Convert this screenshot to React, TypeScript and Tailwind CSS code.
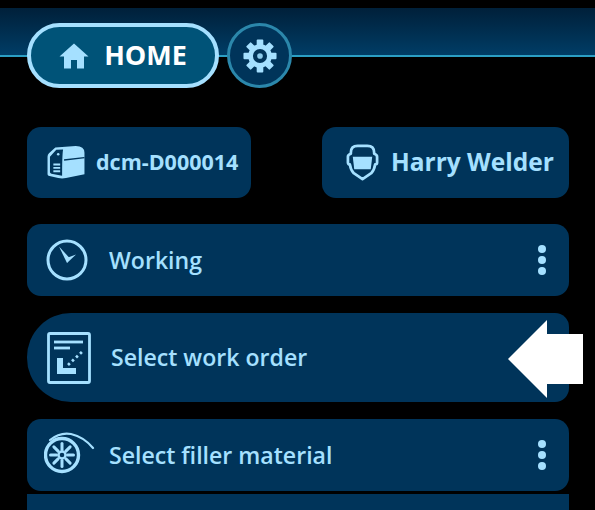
import type { ReactNode } from 'react';

const FONT = "font-['Open_Sans',sans-serif]";

const HomeIcon = () => (
  <svg viewBox="0 0 30 26" className="w-[30px] h-[26px]">
    <path
      fill="#a5e0ff"
      d="M15 0.500 L29.500 13.500 H25 V25.500 H18 V17 H12 V25.500 H5 V13.500 H0.500 Z"
    />
  </svg>
);

const GearIcon = () => (
  <svg viewBox="0 0 36 36" className="w-[34px] h-[34px]">
    <g fill="#a5e0ff">
      {[0, 45, 90, 135, 180, 225, 270, 315].map((a) => (
        <rect key={a} x="14.5" y="0.500" width="7" height="9" rx="1" transform={`rotate(${a} 18 18)`} />
      ))}
    </g>
    <circle cx="18" cy="18" r="12.500" fill="#a5e0ff" />
    <circle cx="18" cy="18" r="7.500" fill="#00345a" />
    <circle cx="18" cy="18" r="3" fill="#8ccbec" />
  </svg>
);

const MachineIcon = () => (
  <svg viewBox="0 0 40 36" className="w-[40px] h-[35px]">
    <path
      d="M9 2.500 L30 1 Q39 1 39 8 V30 L20 34 Q16 35 12 34 L3 32 Q1 31.500 1 30 V12 Q1 10 2.500 8.500 Z"
      fill="#a5e0ff"
    />
    <path d="M3.500 12 L10 5 L17 4.500 Q16 10 16 31.500 L5 29.500 Q3.500 29 3.500 28 Z" fill="#00345a" />
    <circle cx="12" cy="9.500" r="1.300" fill="#a5e0ff" />
    <path d="M7 20 H14 M7 23.500 H14 M7 27 H14" stroke="#a5e0ff" strokeWidth="2" />
    <path d="M18 15.500 L39 13" stroke="#00345a" strokeWidth="1.500" />
  </svg>
);

const HelmetIcon = () => (
  <svg viewBox="0 0 36 38" className="w-[35px] h-[37px]">
    <path
      d="M6 9 Q6 2 13 2 H23 Q30 2 30 9 V10 Q33 11 33 13 V19 Q33 21 31 21 Q30 27 27 30 L18 36 L9 30 Q6 27 5 21 Q3 21 3 19 V13 Q3 11 6 10 Z"
      fill="none"
      stroke="#a5e0ff"
      strokeWidth="2.800"
      strokeLinejoin="round"
    />
    <path d="M8 13 H28 L26.500 26 H9.500 Z" fill="#a5e0ff" />
  </svg>
);

const ClockIcon = () => (
  <svg viewBox="0 0 42 42" className="w-[42px] h-[42px] ml-[2px]">
    <circle cx="21" cy="21" r="19" fill="none" stroke="#a5e0ff" strokeWidth="3" />
    <path d="M13 7.500 L24 19.500 L21 24 Z" fill="#a5e0ff" />
    <path d="M21 24 L22 18.500 L30 15.500 Z" fill="#a5e0ff" />
  </svg>
);

const OrderIcon = () => (
  <svg viewBox="0 0 44 52" className="w-[44px] h-[52px]">
    <rect x="1.500" y="1.500" width="41" height="49" rx="1.500" fill="none" stroke="#a5e0ff" strokeWidth="2.800" />
    <path d="M7 10 H36" stroke="#a5e0ff" strokeWidth="2.800" />
    <path d="M7 16 H23" stroke="#a5e0ff" strokeWidth="2.800" />
    <path d="M10 26 H16 V36 H29 V42 H10 Z" fill="#a5e0ff" />
    <path d="M21 33 L36 19" stroke="#a5e0ff" strokeWidth="2.800" strokeDasharray="2.500 3" />
  </svg>
);

const SpoolIcon = () => (
  <svg viewBox="0 -2 52 46" className="w-[52px] h-[46px]">
    <circle cx="18" cy="21" r="16.500" fill="none" stroke="#a5e0ff" strokeWidth="3.400" />
    <path d="M6 6 Q16 -2 27 0 Q40 3 49 14" fill="none" stroke="#a5e0ff" strokeWidth="2.200" strokeLinecap="round" />
    <circle cx="18" cy="21" r="3.500" fill="none" stroke="#a5e0ff" strokeWidth="2.400" />
    {[0, 45, 90, 135, 180, 225, 270, 315].map((a) => (
      <path
        key={a}
        d="M18 15.500 V9.500"
        stroke="#a5e0ff"
        strokeWidth="3"
        strokeLinecap="round"
        transform={`rotate(${a} 18 21)`}
      />
    ))}
  </svg>
);

const Dots = () => (
  <div className="flex flex-col gap-[3px]">
    <span className="w-[8px] h-[8px] rounded-full bg-[#a5e0ff]" />
    <span className="w-[8px] h-[8px] rounded-full bg-[#a5e0ff]" />
    <span className="w-[8px] h-[8px] rounded-full bg-[#a5e0ff]" />
  </div>
);

const MenuRow = ({ icon, label }: { icon: ReactNode; label: string }) => (
  <div className="h-[72px] rounded-[14px] bg-[#00345a] flex items-center pl-[17px] pr-[23px]">
    <div className="w-[52px] flex justify-start shrink-0">{icon}</div>
    <span className="ml-[13px] text-[23.1px] font-semibold text-[#a5e0ff] flex-1">{label}</span>
    <Dots />
  </div>
);

export default function App() {
  return (
    <div className={`relative w-[595px] h-[510px] overflow-hidden bg-black pt-2 ${FONT}`}>
      {/* Header band */}
      <div className="h-[49px] bg-gradient-to-b from-[#00203a] to-[#003d66] border-b-2 border-[#2b9fc4]">
        <div className="flex items-start gap-2 pl-[27px] pt-[15px]">
          <div className="w-[192px] h-[65px] rounded-full border-[4px] border-[#a5e0ff] bg-[#005378] flex items-center justify-center gap-[15px]">
            <HomeIcon />
            <span className="text-[27px] font-bold text-white">HOME</span>
          </div>
          <div className="w-[65px] h-[65px] rounded-full border-[3px] border-[#2b87ab] bg-[#00345a] flex items-center justify-center">
            <GearIcon />
          </div>
        </div>
      </div>

      <div className="ml-[27px] pt-[70px] w-[542px]">
        {/* Device and user */}
        <div className="flex justify-between">
          <div className="w-[224px] h-[71px] rounded-[14px] bg-[#00345a] flex items-center pl-[19px] gap-[10px]">
            <MachineIcon />
            <span className="text-[21.5px] font-bold text-[#a5e0ff]">dcm-D000014</span>
          </div>
          <div className="w-[247px] h-[71px] rounded-[14px] bg-[#00345a] flex items-center pl-[23px] gap-[11px]">
            <HelmetIcon />
            <span className="text-[24.5px] font-bold text-[#a5e0ff]">Harry Welder</span>
          </div>
        </div>

        <div className="mt-[26px]">
          <MenuRow icon={<ClockIcon />} label="Working" />
        </div>

        <div className="mt-[17px] h-[89px] rounded-[14px] rounded-l-[44px] bg-[#00345a] flex items-center pl-[20px]">
          <OrderIcon />
          <span className="ml-[20px] text-[23.1px] font-semibold text-[#a5e0ff]">Select work order</span>
        </div>

        <div className="mt-[17px]">
          <MenuRow icon={<SpoolIcon />} label="Select filler material" />
        </div>

        <div className="mt-[3px] h-[40px] bg-[#00345a]" />
      </div>

      {/* Callout arrow over the row */}
      <svg viewBox="0 0 76 78" className="absolute left-[507px] top-[320px] w-[76px] h-[78px]">
        <path d="M1 39 L40 0 V14 H76 V64 H40 V78 Z" fill="#ffffff" />
      </svg>
    </div>
  );
}
